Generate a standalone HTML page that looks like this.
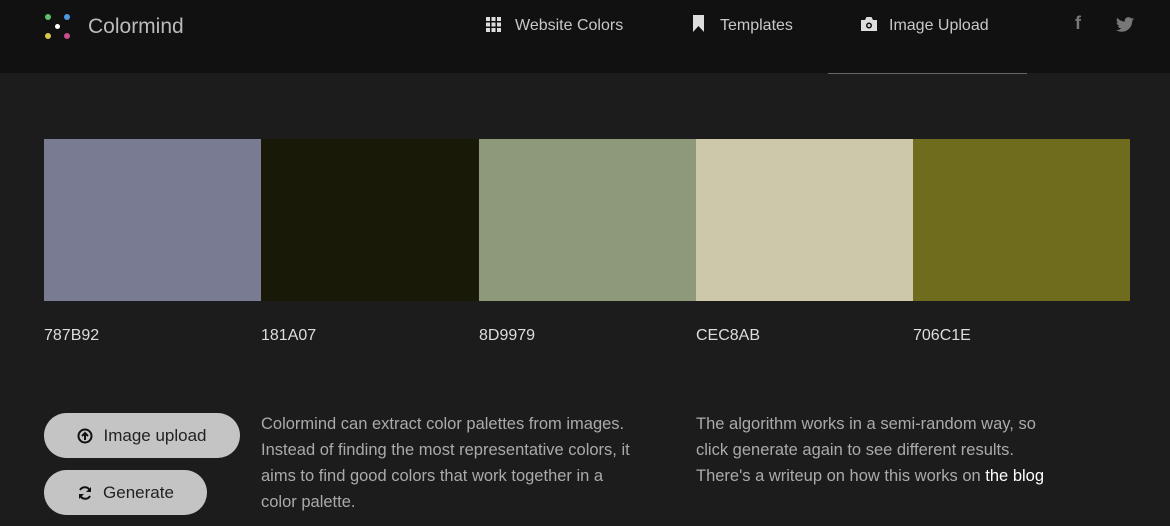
<!DOCTYPE html>
<html><head><style>
*{margin:0;padding:0;box-sizing:border-box}
body{width:1170px;height:526px;overflow:hidden;background:#1c1c1c;font-family:"Liberation Sans",sans-serif;color:#ccc;position:relative}
.hdr{position:absolute;left:0;top:0;width:1170px;height:73px;background:#111}
.a{position:absolute}
.nav{font-size:16px;color:#c8c8c8;top:17px}
.sw{position:absolute;top:139px;height:162px;width:217px}
.hex{position:absolute;top:327px;font-size:16px;color:#ddd}
.btn{position:absolute;left:44px;background:#c4c4c4;border-radius:24px;color:#222;font-size:17px;height:45px;display:flex;align-items:center;justify-content:center;gap:10px}
.p{position:absolute;top:411px;font-size:16.5px;line-height:26px;color:#aaa;white-space:nowrap}
</style></head><body>
<div class="hdr"></div>
<svg class="a" style="left:42px;top:12px" width="32" height="30">
<circle cx="6" cy="5" r="3" fill="#5fbf6f"/><circle cx="25" cy="5" r="3" fill="#4a9be0"/><circle cx="15.5" cy="14.5" r="2.5" fill="#fff"/><circle cx="6" cy="24" r="3" fill="#d8c84a"/><circle cx="25" cy="24" r="3" fill="#c8508a"/></svg>
<div class="a" style="left:88px;top:15px;font-size:21px;color:#bbb">Colormind</div>
<svg class="a" style="left:486px;top:17px" width="15" height="15" fill="#ddd"><rect x="0" y="0" width="4" height="4"/><rect x="5.5" y="0" width="4" height="4"/><rect x="11" y="0" width="4" height="4"/><rect x="0" y="5.5" width="4" height="4"/><rect x="5.5" y="5.5" width="4" height="4"/><rect x="11" y="5.5" width="4" height="4"/><rect x="0" y="11" width="4" height="4"/><rect x="5.5" y="11" width="4" height="4"/><rect x="11" y="11" width="4" height="4"/></svg>
<div class="a nav" style="left:515px">Website Colors</div>
<svg class="a" style="left:693px;top:15px" width="12" height="18"><path d="M0 0H11V17L5.5 11L0 17Z" fill="#ddd"/></svg>
<div class="a nav" style="left:720px">Templates</div>
<svg class="a" style="left:861px;top:17px" width="16" height="14"><path d="M0 3H4L5.5 0H10.5L12 3H16V14H0Z" fill="#ddd"/><circle cx="8" cy="8.5" r="3" fill="#111"/><circle cx="8" cy="8.5" r="1.5" fill="#ddd"/></svg>
<div class="a nav" style="left:889px">Image Upload</div>
<div class="a" style="left:828px;top:73px;width:199px;height:1px;background:#666"></div>
<div class="a" style="left:1075px;top:13px;font-size:18px;color:#777;font-weight:bold">f</div>
<svg class="a" style="left:1116px;top:17px" width="18" height="15"><path d="M18 2c-.7.3-1.4.5-2.1.6.8-.5 1.3-1.2 1.6-2-.7.4-1.5.7-2.3.9C14.500.6 13.500.1 12.400.1c-2 0-3.700 1.700-3.700 3.700 0 .3 0 .6.1.8C5.700 4.500 3 3.100 1.200.8.900 1.400.700 2 .700 2.700c0 1.300.7 2.400 1.600 3.100-.6 0-1.200-.2-1.700-.5 0 1.800 1.300 3.300 3 3.600-.3.1-.6.1-1 .1-.2 0-.5 0-.7-.1.5 1.500 1.800 2.500 3.400 2.600-1.300 1-2.800 1.600-4.600 1.600H0c1.600 1 3.600 1.600 5.700 1.600 6.800 0 10.500-5.600 10.500-10.500v-.5C16.900 3.400 17.500 2.700 18 2z" fill="#777"/></svg>
<div class="sw" style="left:44px;background:#787B92"></div>
<div class="sw" style="left:261px;background:#181A07"></div>
<div class="sw" style="left:479px;background:#8D9979"></div>
<div class="sw" style="left:696px;background:#CEC8AB"></div>
<div class="sw" style="left:913px;width:217px;background:#706C1E"></div>
<div class="hex" style="left:44px">787B92</div>
<div class="hex" style="left:261px">181A07</div>
<div class="hex" style="left:479px">8D9979</div>
<div class="hex" style="left:696px">CEC8AB</div>
<div class="hex" style="left:913px">706C1E</div>
<div class="btn" style="top:413px;width:196px"><svg width="16" height="16"><circle cx="8" cy="8" r="6.5" fill="none" stroke="#111" stroke-width="2"/><path d="M8 12V5M5 8l3-3 3 3" stroke="#111" stroke-width="2" fill="none"/></svg>Image upload</div>
<div class="btn" style="top:470px;width:163px"><svg width="16" height="16"><path d="M13 6A5.5 5.5 0 0 0 3 5M3 10a5.5 5.5 0 0 0 10 1" stroke="#111" stroke-width="2" fill="none"/><path d="M14 2v5H9zM2 14V9h5z" fill="#111"/></svg>Generate</div>
<div class="p" style="left:261px">Colormind can extract color palettes from images.<br>Instead of finding the most representative colors, it<br>aims to find good colors that work together in a<br>color palette.</div>
<div class="p" style="left:696px">The algorithm works in a semi-random way, so<br>click generate again to see different results.<br>There's a writeup on how this works on <b style="color:#fff;font-weight:normal">the blog</b></div>
</body></html>
